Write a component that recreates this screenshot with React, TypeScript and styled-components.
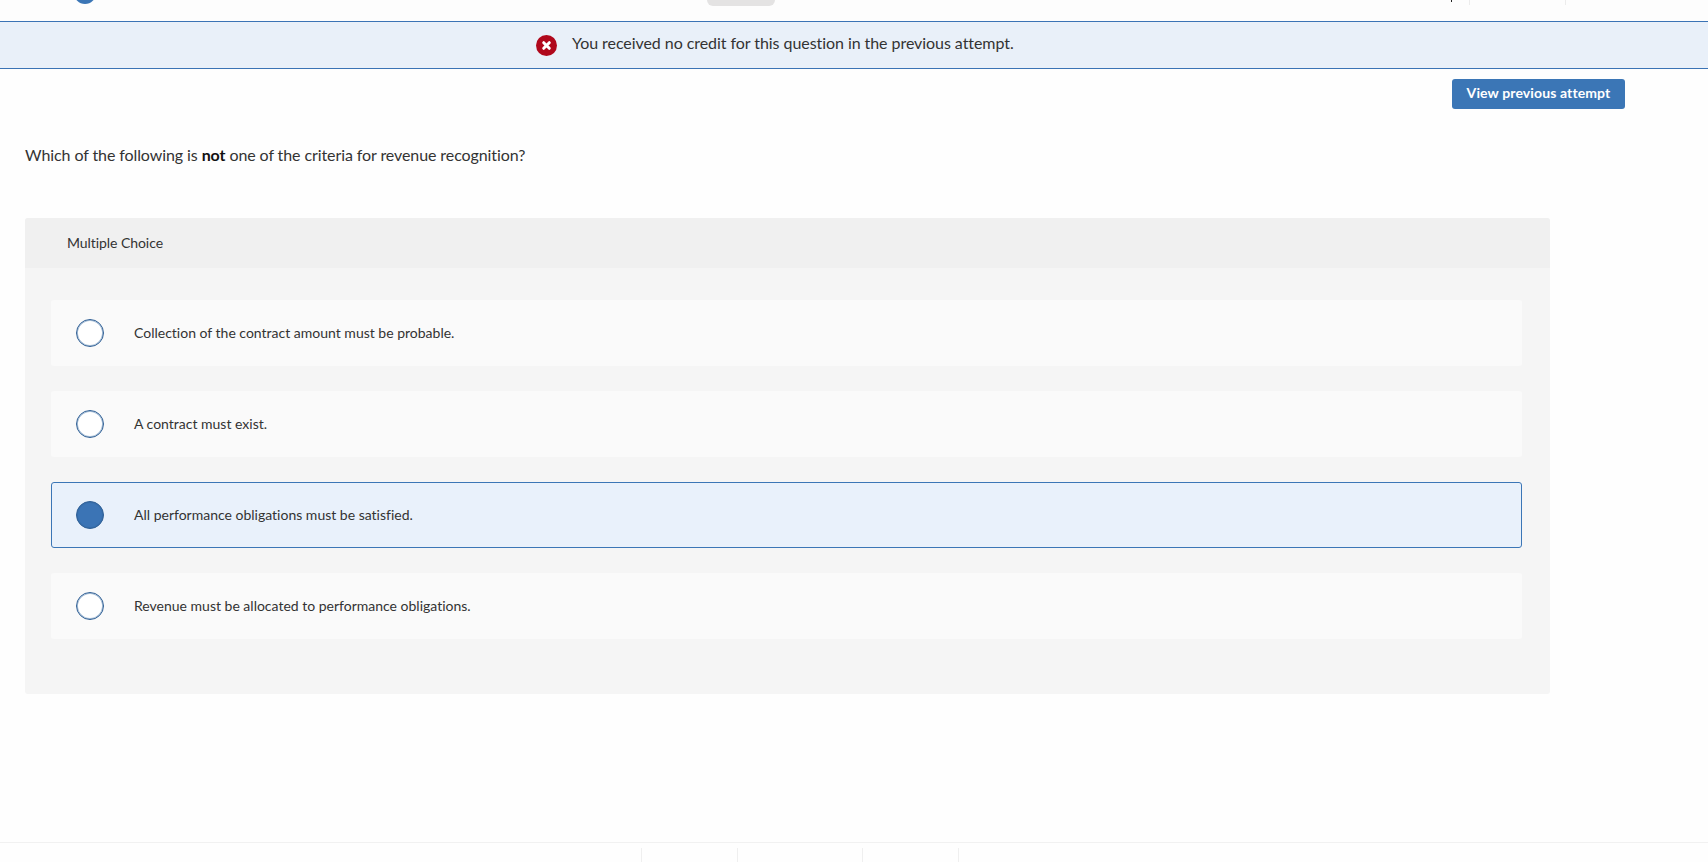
import React from "react";
import styled, { createGlobalStyle } from "styled-components";

const GlobalStyle = createGlobalStyle`
  html, body {
    margin: 0;
    padding: 0;
    background: #fefefe;
  }
  body {
    font-family: Lato, "Liberation Sans", sans-serif;
    font-variant-ligatures: none;
    letter-spacing: -0.06px;
    color: #333;
    overflow: hidden;
  }
`;

const Page = styled.div`
  height: 862px;
  display: flex;
  flex-direction: column;
`;

/* what is left of the page header after scrolling */
const TopBar = styled.div`
  height: 21px;
  flex: none;
  background: #fdfdfd;
  display: flex;
  align-items: flex-start;
  overflow: hidden;
  padding-left: 74px;
`;

const ProgressDot = styled.div`
  width: 22px;
  height: 22px;
  margin-top: -18px;
  border-radius: 50%;
  background: #3b76b6;
  flex: none;
`;

const CenterPill = styled.div`
  width: 68px;
  height: 6px;
  margin-left: 611px;
  background: #e4e3e3;
  border-radius: 0 0 8px 8px;
  flex: none;
`;

const TopMark = styled.div`
  width: 1px;
  height: 2px;
  margin-left: 676px;
  background: #222;
  flex: none;
`;

const TopDivider = styled.div<{ $gap: number }>`
  width: 1px;
  height: 5px;
  margin-left: ${(p) => p.$gap}px;
  background: #ececec;
  flex: none;
`;

const Banner = styled.div`
  height: 48px;
  flex: none;
  box-sizing: border-box;
  background: #e9f0f9;
  border-top: 1px solid #3b73b5;
  border-bottom: 1px solid #3b73b5;
  display: flex;
  align-items: center;
  padding-left: 536px;
  gap: 15px;
  font-size: 16px;
`;

const BannerText = styled.span`
  padding-bottom: 5px;
`;

const ErrorIcon = styled.svg`
  width: 21px;
  height: 21px;
  flex: none;
`;

const ActionRow = styled.div`
  display: flex;
  justify-content: flex-end;
  padding: 10px 83px 0 0;
`;

const PrimaryButton = styled.button`
  width: 173px;
  height: 30px;
  border: 0;
  border-radius: 3px;
  background: #3b76b6;
  color: #fff;
  font-family: inherit;
  font-size: 14px;
  font-weight: 700;
  letter-spacing: 0.12px;
  padding: 0 0 3px;
`;

const Question = styled.p`
  margin: 36px 0 53px 25px;
  font-size: 16px;
  line-height: 20px;
  letter-spacing: -0.09px;

  strong {
    font-weight: 700;
    color: #111;
  }
`;

const Panel = styled.section`
  width: 1525px;
  margin-left: 25px;
  background: #f5f5f5;
  border-radius: 3px;
  overflow: hidden;
`;

const PanelHeader = styled.div`
  height: 50px;
  box-sizing: border-box;
  background: #f0f0f0;
  display: flex;
  align-items: center;
  padding: 0 0 2px 42px;
  font-size: 14px;
`;

const OptionList = styled.div`
  display: flex;
  flex-direction: column;
  gap: 25px;
  padding: 32px 28px 55px 26px;
`;

const Option = styled.div<{ $selected?: boolean }>`
  height: 66px;
  box-sizing: border-box;
  display: flex;
  align-items: center;
  padding-left: ${(p) => (p.$selected ? 24 : 25)}px;
  gap: 30px;
  border-radius: 3px;
  background: ${(p) => (p.$selected ? "#e9f1fb" : "#fafafa")};
  border: ${(p) => (p.$selected ? "1px solid #3b76b6" : "0")};
  font-size: 14px;
  letter-spacing: 0;
`;

const OptionText = styled.span`
  padding-bottom: 2px;
`;

const Radio = styled.span<{ $selected?: boolean }>`
  width: 28px;
  height: 28px;
  box-sizing: border-box;
  flex: none;
  border-radius: 50%;
  border: 1px solid #2f5f95;
  box-shadow: inset 0 0 0 1px rgba(51, 105, 159, 0.45);
  background: ${(p) => (p.$selected ? "#3b74b5" : "#fff")};
`;

const Footer = styled.footer`
  margin-top: auto;
  height: 20px;
  flex: none;
  box-sizing: border-box;
  border-top: 1px solid #f1f1f1;
  padding: 5px 0 0 641px;
  display: flex;
`;

const FooterDivider = styled.div<{ $gap: number }>`
  width: 1px;
  height: 14px;
  margin-left: ${(p) => p.$gap}px;
  background: #efefef;
`;

const options = [
  { text: "Collection of the contract amount must be probable." },
  { text: "A contract must exist." },
  { text: "All performance obligations must be satisfied.", selected: true },
  { text: "Revenue must be allocated to performance obligations." },
];

export default function App() {
  return (
    <Page>
      <GlobalStyle />
      <TopBar>
        <ProgressDot />
        <CenterPill />
        <TopMark />
        <TopDivider $gap={17} />
        <TopDivider $gap={95} />
      </TopBar>

      <Banner>
        <ErrorIcon viewBox="0 0 21 21">
          <circle cx="10.5" cy="10.5" r="10.5" fill="#b0081c" />
          <path d="M7.7 7.7l5.6 5.6M13.3 7.7l-5.6 5.6" stroke="#fff" strokeWidth="3" strokeLinecap="round" />
        </ErrorIcon>
        <BannerText>You received no credit for this question in the previous attempt.</BannerText>
      </Banner>

      <ActionRow>
        <PrimaryButton>View previous attempt</PrimaryButton>
      </ActionRow>

      <Question>
        Which of the following is <strong>not</strong> one of the criteria for revenue recognition?
      </Question>

      <Panel>
        <PanelHeader>Multiple Choice</PanelHeader>
        <OptionList>
          {options.map((o) => (
            <Option key={o.text} $selected={o.selected}>
              <Radio $selected={o.selected} />
              <OptionText>{o.text}</OptionText>
            </Option>
          ))}
        </OptionList>
      </Panel>

      <Footer>
        <FooterDivider $gap={0} />
        <FooterDivider $gap={95} />
        <FooterDivider $gap={124} />
        <FooterDivider $gap={95} />
      </Footer>
    </Page>
  );
}
